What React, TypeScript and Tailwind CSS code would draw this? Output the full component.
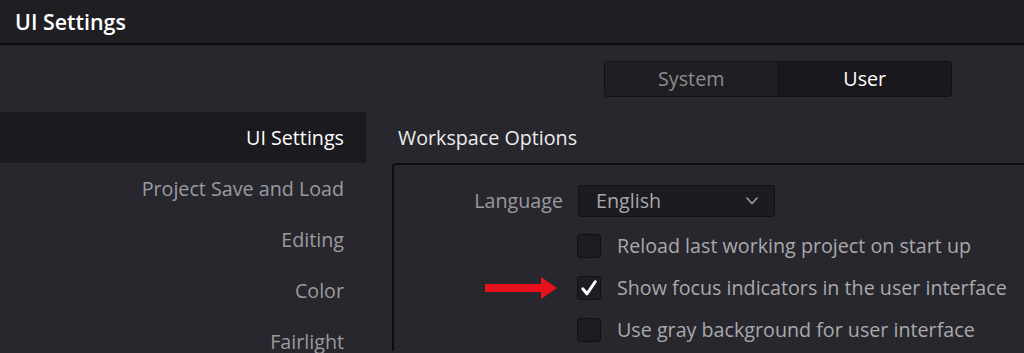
import React from 'react';

const sideItems = ['UI Settings', 'Project Save and Load', 'Editing', 'Color', 'Fairlight'];

const options = [
  { label: 'Reload last working project on start up', checked: false },
  { label: 'Show focus indicators in the user interface', checked: true, marked: true },
  { label: 'Use gray background for user interface', checked: false },
];

const Checkbox: React.FC<{ checked: boolean }> = ({ checked }) => (
  <div className="w-[24px] h-[24px] rounded-[3px] bg-[#1d1c20] border border-[#111113] flex items-center justify-center shrink-0">
    {checked && (
      <svg viewBox="0 0 24 24" className="w-[20px] h-[20px]">
        <path d="M4.5 13 L9.5 19 L19.5 4.5" fill="none" stroke="#ffffff" strokeWidth={3.6} strokeLinecap="round" strokeLinejoin="round" />
      </svg>
    )}
  </div>
);

export default function App() {
  return (
    <div className="w-[1024px] h-[353px] overflow-hidden bg-[#28272d] font-['Open_Sans',sans-serif]">
      {/* title bar */}
      <div className="h-[45px] bg-[#1f1e23] border-b-2 border-[#0e0e10] flex items-center pl-[15px]">
        <h1 className="text-[21.4px] font-semibold text-white leading-none pt-[1px]">UI Settings</h1>
      </div>

      {/* System / User toggle */}
      <div className="flex justify-end pr-[72px] pt-[16px] pb-[15px]">
        <div className="flex h-[36px] w-[348px] rounded-[3px] border border-[#111113] overflow-hidden text-[19.7px]">
          <div className="flex-1 flex items-center justify-center bg-[#1f1e22] text-[#8c8c8f] border-r border-[#111113]">System</div>
          <div className="flex-1 flex items-center justify-center bg-[#19181c] text-white">User</div>
        </div>
      </div>

      <div className="flex">
        {/* sidebar */}
        <div className="w-[366px] shrink-0">
          {sideItems.map((item, i) => (
            <div
              key={item}
              className={`h-[51px] flex items-center justify-end pr-[22px] text-[19.7px] ${
                i === 0 ? 'bg-[#1b1a1e] text-white' : 'text-[#9b9b9e]'
              }`}
            >
              {item}
            </div>
          ))}
        </div>

        {/* main */}
        <div className="flex-1 pl-[26px]">
          <div className="h-[51px] flex items-center pl-[6px] text-[19.7px] text-[#ececec]">Workspace Options</div>
          <div className="-mr-4 rounded-tl-[4px] border-l-2 border-t-2 border-[#0e0e10] pt-[20px]">
            <div className="flex items-center">
              <div className="w-[169px] text-right text-[19.7px] text-[#9a9a9d]">Language</div>
              <div className="ml-[15px] w-[197px] h-[32px] rounded-[3px] bg-[#1c1b1f] border border-[#111113] flex items-center justify-between pl-[17px] pr-[16px] text-[19.7px] text-[#a7a7aa]">
                <span>English</span>
                <svg viewBox="0 0 12 8" className="w-[12px] h-[8px]">
                  <path d="M1 1 L6 6.5 L11 1" fill="none" stroke="#a0a0a3" strokeWidth={1.6} strokeLinecap="round" strokeLinejoin="round" />
                </svg>
              </div>
            </div>
            <div className="mt-[8px] pl-[183px]">
              {options.map((o) => (
                <div key={o.label} className="relative h-[42px] flex items-center">
                  {o.marked && (
                    <svg viewBox="0 0 72 22" className="absolute left-[-92px] top-[10px] w-[72px] h-[22px]">
                      <rect x="0" y="7" width="60" height="8" fill="#e8121f" />
                      <polygon points="56,0 72,11 56,22" fill="#e8121f" />
                    </svg>
                  )}
                  <Checkbox checked={o.checked} />
                  <span className="ml-[16px] text-[19.7px] text-[#a9a9ac] whitespace-nowrap">{o.label}</span>
                </div>
              ))}
            </div>
          </div>
        </div>
      </div>
    </div>
  );
}
